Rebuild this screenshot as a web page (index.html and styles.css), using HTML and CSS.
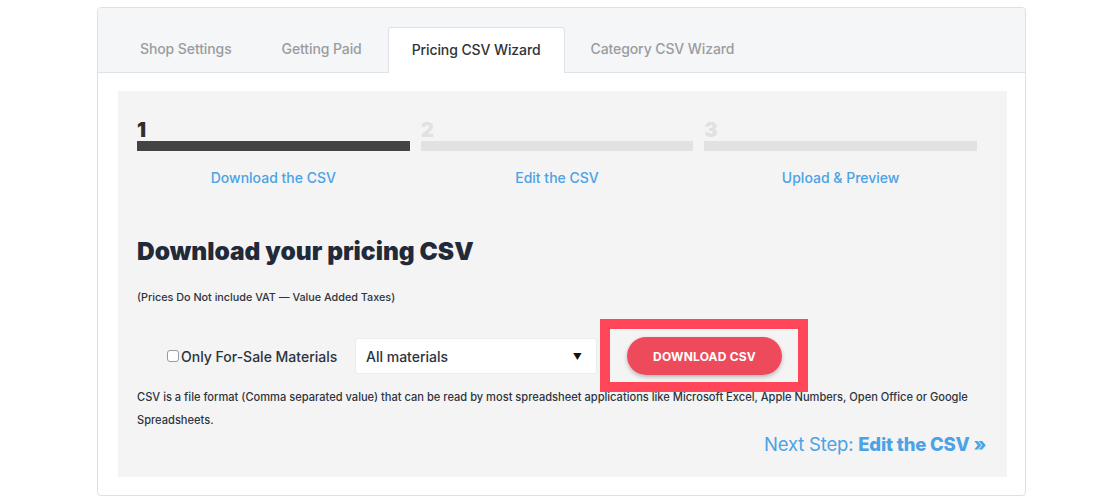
FILE: index.html
```html
<!DOCTYPE html>
<html>
<head>
<meta charset="utf-8">
<link rel="stylesheet" href="styles.css">
</head>
<body>
<div class="card">
  <div class="tabs">
    <div class="tab">Shop Settings</div>
    <div class="tab">Getting Paid</div>
    <div class="tab active">Pricing CSV Wizard</div>
    <div class="tab">Category CSV Wizard</div>
  </div>
  <div class="card-body">
    <div class="panel">
      <div class="steps">
        <div class="step current">
          <div class="step-num">1</div>
          <div class="step-bar"></div>
          <a class="step-label">Download the CSV</a>
        </div>
        <div class="step">
          <div class="step-num">2</div>
          <div class="step-bar"></div>
          <a class="step-label">Edit the CSV</a>
        </div>
        <div class="step">
          <div class="step-num">3</div>
          <div class="step-bar"></div>
          <a class="step-label">Upload &amp; Preview</a>
        </div>
      </div>
      <h1 class="title">Download your pricing CSV</h1>
      <p class="note">(Prices Do Not include VAT — Value Added Taxes)</p>
      <div class="controls">
        <label class="check"><span class="box"></span>Only For-Sale Materials</label>
        <div class="select"><span>All materials</span><span class="arrow">▼</span></div>
        <div class="btn-wrap">
          <button class="btn">DOWNLOAD CSV</button>
          <span class="highlight"></span>
        </div>
      </div>
      <p class="desc">CSV is a file format (Comma separated value) that can be read by most spreadsheet applications like Microsoft Excel, Apple Numbers, Open Office or Google Spreadsheets.</p>
      <div class="next"><a>Next Step: <b>Edit the CSV »</b></a></div>
    </div>
  </div>
</div>
</body>
</html>
```
FILE: styles.css
```css
* { box-sizing: border-box; }
html, body { margin: 0; padding: 0; background: #fff; }
body {
  font-family: Inter, "Liberation Sans", sans-serif;
  color: #2b3340;
  padding: 7px 0 0 97px;
}
.card {
  width: 929px;
  height: 489px;
  border: 1px solid #dde1e6;
  border-radius: 4px;
  overflow: hidden;
  box-shadow: 0 1px 1px rgba(0,0,0,0.04);
}
.tabs {
  display: flex;
  gap: 2px;
  background: #f5f6f7;
  padding: 19px 0 0 18px;
  height: 65px;
  border-bottom: 1px solid #dfe2e6;
}
.tab {
  height: 43px;
  padding: 0 24px;
  display: flex;
  align-items: center;
  font-size: 14px;
  font-weight: 500;
  color: #9a9c9f;
  letter-spacing: -0.1px;
}
.tab.active {
  background: #fff;
  color: #2f3336;
  border: 1px solid #dfe2e6;
  border-bottom: none;
  border-radius: 3px 3px 0 0;
  margin-bottom: -1px;
  height: 46px;
  padding: 0 23px 3px;
}
.card-body {
  padding: 18px 18px 0 20px;
}
.panel {
  background: #f4f4f4;
  height: 386px;
  padding: 31px 19px 0 19px;
}
.steps {
  display: grid;
  grid-template-columns: repeat(3, 1fr);
}
.step { padding-right: 11px; }
.step-num {
  font-size: 20px;
  font-weight: 900;
  line-height: 16px;
  height: 19px;
  color: #2e2e2e;
}
.step:not(.current) .step-num { color: #dfe1e3; }
.step-bar {
  height: 10px;
  background: #e0e2e4;
}
.step.current .step-bar { background: #444; }
.step-label {
  display: block;
  text-align: center;
  font-size: 14px;
  font-weight: 500;
  color: #4ba2e4;
  margin-top: 18px;
  line-height: 18px;
}
.title {
  margin: 50px 0 0;
  font-size: 24.5px;
  font-weight: 900;
  color: #222a3a;
  line-height: 28px;
  letter-spacing: 0;
}
.note {
  margin: 26px 0 0;
  font-size: 10.8px;
  font-weight: 500;
  color: #2f3540;
  line-height: 14px;
}
.controls {
  display: flex;
  align-items: center;
  margin-top: 31px;
  height: 40px;
  padding-left: 30px;
}
.check {
  display: flex;
  align-items: center;
  font-size: 14px;
  font-weight: 500;
  color: #2b3340;
  width: 188px;
}
.box {
  width: 12px;
  height: 12px;
  border: 1px solid #9a9a9a;
  border-radius: 3px;
  background: #fff;
  margin-right: 2px;
}
.select {
  width: 242px;
  height: 36px;
  background: #fff;
  border: 1px solid #ececec;
  border-radius: 3px;
  display: flex;
  align-items: center;
  justify-content: space-between;
  padding: 0 14px 0 10px;
  font-size: 14px;
  font-weight: 500;
  color: #2b3340;
}
.arrow { font-size: 9px; color: #111; }
.btn-wrap {
  position: relative;
  margin-left: 30px;
}
.btn {
  display: block;
  width: 155px;
  height: 38px;
  border: none;
  border-radius: 19px;
  background: linear-gradient(#ef4a5c, #ec4a5b);
  color: #fff;
  font-family: Inter, "Liberation Sans", sans-serif;
  font-size: 12px;
  font-weight: 700;
  letter-spacing: 0.2px;
  box-shadow: 0 2px 4px rgba(0,0,0,0.25);
}
.highlight {
  position: absolute;
  left: -27px;
  top: -18px;
  width: 208px;
  height: 73px;
  border: 10px solid #ff4759;
}
.desc {
  margin: 10px 0 0;
  font-size: 11.1px;
  font-weight: 500;
  line-height: 23px;
  color: #2f3540;
}
.next {
  text-align: right;
  margin-top: 1px;
  padding-right: 2px;
}
.next a {
  font-size: 18.5px;
  color: #4ba2e4;
  font-weight: 400;
  letter-spacing: -0.2px;
}
.next b { font-weight: 800; }
```
